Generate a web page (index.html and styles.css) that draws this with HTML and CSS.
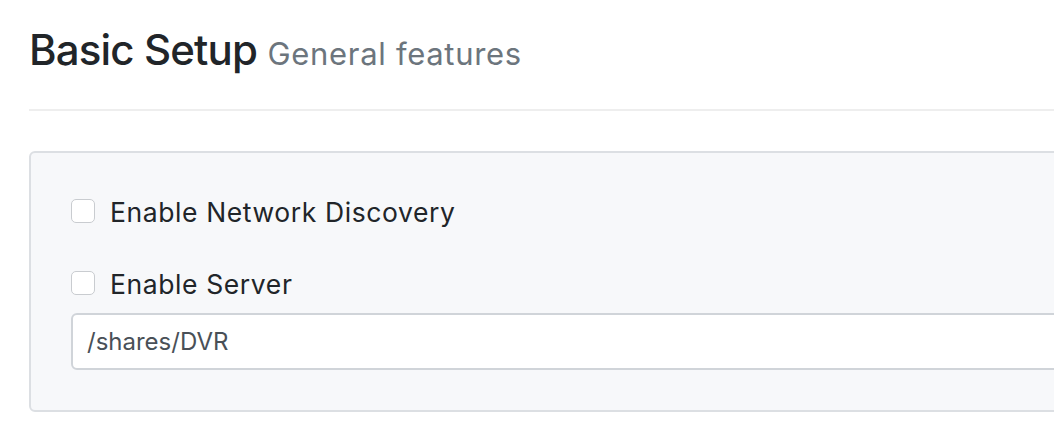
FILE: index.html
```html
<!DOCTYPE html>
<html lang="en">
<head>
<meta charset="utf-8">
<title>Basic Setup</title>
<link rel="stylesheet" href="styles.css">
</head>
<body>
<div class="page">
  <h3 class="title">Basic Setup <small class="muted">General features</small></h3>
  <hr class="divider">
  <div class="card">
    <label class="check first">
      <input type="checkbox" class="box">
      <span class="label">Enable Network Discovery</span>
    </label>
    <label class="check">
      <input type="checkbox" class="box">
      <span class="label">Enable Server</span>
    </label>
    <input type="text" class="field" value="/shares/DVR">
  </div>
</div>
</body>
</html>
```
FILE: styles.css
```css
html, body {
  margin: 0;
  padding: 0;
  background: #ffffff;
  overflow: hidden;
}

body {
  font-family: Inter, "Noto Sans", "Liberation Sans", sans-serif;
  color: #212529;
}

.page {
  width: 1200px;
  padding: 25px 0 0 29px;
}

.title {
  margin: 0;
  font-size: 42px;
  line-height: 1.2;
  font-weight: 500;
  color: #212529;
  letter-spacing: -0.85px;
}

.muted {
  font-size: 31px;
  font-weight: 400;
  color: #6c757d;
  letter-spacing: 0.7px;
}

.divider {
  margin: 33.5px 0 0;
  border: 0;
  border-top: 2px solid #eeeeee;
  height: 0;
}

.card {
  margin-top: 40.5px;
  background: #f7f8fa;
  border: 2px solid #dcdfe3;
  border-radius: 6px;
  padding: 40px 40px 40px 40px;
  display: flex;
  flex-direction: column;
}

.check {
  display: flex;
  align-items: flex-start;
  gap: 15px;
  height: 38px;
  font-size: 26.5px;
  line-height: 38px;
  letter-spacing: 0.6px;
  color: #212529;
}

.check.first {
  margin-bottom: 34px;
}

.box {
  appearance: none;
  -webkit-appearance: none;
  margin: 5.5px 0 0 0;
  width: 24px;
  height: 24px;
  box-sizing: border-box;
  background: #ffffff;
  border: 1.5px solid #c9ccd0;
  border-radius: 5px;
  flex: none;
}

.field {
  margin-top: 10px;
  box-sizing: border-box;
  width: 100%;
  height: 57px;
  padding: 0 14px;
  border: 2px solid #d0d4d9;
  border-radius: 6px;
  background: #ffffff;
  font-family: Inter, "Noto Sans", "Liberation Sans", sans-serif;
  font-size: 24px;
  color: #495057;
  outline: none;
}
```
